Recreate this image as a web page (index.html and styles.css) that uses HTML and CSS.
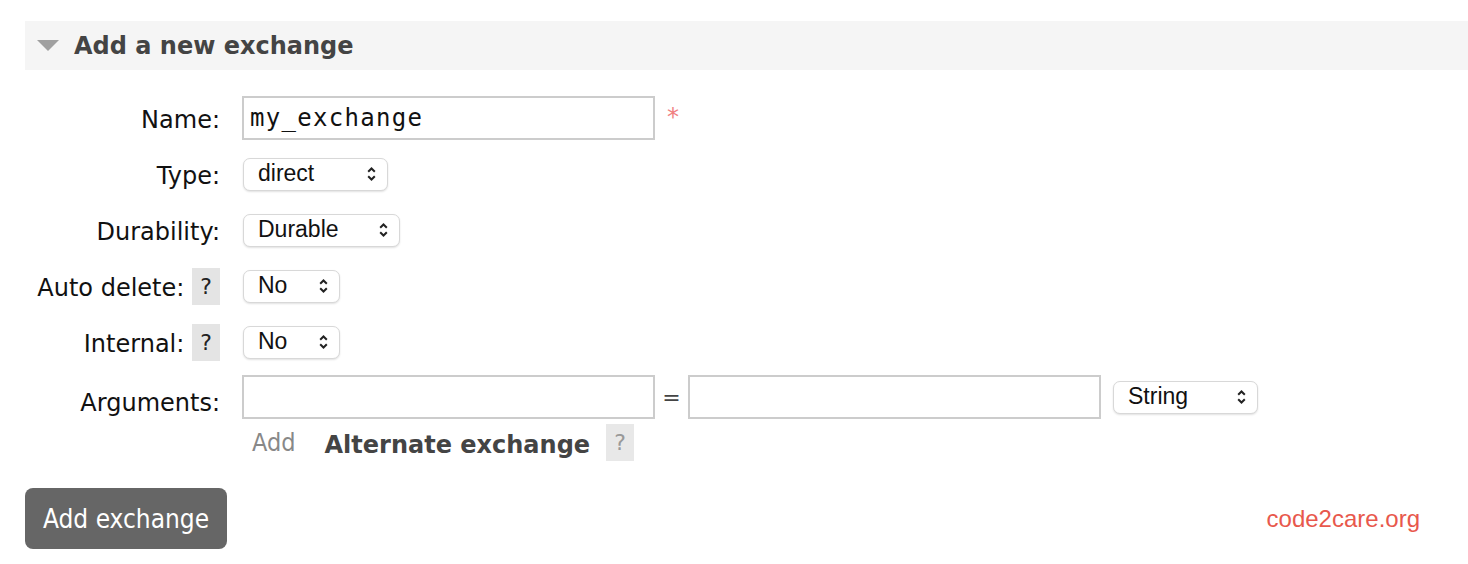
FILE: index.html
```html
<!DOCTYPE html>
<html>
	<head>
		<meta charset="utf-8" />
		<title>Add a new exchange</title>
		<link rel="stylesheet" href="styles.css">
	</head>
	<body>
		<div class="section">
			<h2><span class="arrow"></span>Add a new exchange</h2>
			<form class="hider">
				<div class="row">
					<div class="label">Name:</div>
					<div class="field">
						<input class="text mono" type="text" value="my_exchange" />
						<span class="mand">*</span>
					</div>
				</div>
				<div class="row">
					<div class="label">Type:</div>
					<div class="field">
						<span class="select w-type">direct<svg viewBox="0 0 10 14"><path d="M2 5 L5 2 L8 5 M2 9 L5 12 L8 9" /></svg></span>
					</div>
				</div>
				<div class="row">
					<div class="label">Durability:</div>
					<div class="field">
						<span class="select w-dur">Durable<svg viewBox="0 0 10 14"><path d="M2 5 L5 2 L8 5 M2 9 L5 12 L8 9" /></svg></span>
					</div>
				</div>
				<div class="row">
					<div class="label">Auto delete: <span class="help">?</span></div>
					<div class="field">
						<span class="select w-no">No<svg viewBox="0 0 10 14"><path d="M2 5 L5 2 L8 5 M2 9 L5 12 L8 9" /></svg></span>
					</div>
				</div>
				<div class="row">
					<div class="label">Internal: <span class="help">?</span></div>
					<div class="field">
						<span class="select w-no">No<svg viewBox="0 0 10 14"><path d="M2 5 L5 2 L8 5 M2 9 L5 12 L8 9" /></svg></span>
					</div>
				</div>
				<div class="row args">
					<div class="label">Arguments:</div>
					<div class="field multi">
						<div class="line">
							<input class="text" type="text" value="" />
							<span class="eq">=</span>
							<input class="text" type="text" value="" />
							<span class="select w-type">String<svg viewBox="0 0 10 14"><path d="M2 5 L5 2 L8 5 M2 9 L5 12 L8 9" /></svg></span>
						</div>
						<div class="line sub">
							<span class="add">Add</span>
							<span class="alt">Alternate exchange</span>
							<span class="help faded">?</span>
						</div>
					</div>
				</div>
				<div class="actions">
					<button type="button" class="submit">Add exchange</button>
					<span class="mark">code2care.org</span>
				</div>
			</form>
		</div>
	</body>
</html>
```

FILE: styles.css
```css
body {
	margin:0;
	padding:21px 0 0 25px;
	font-family:"DejaVu Sans", Verdana, sans-serif;
	color:#222;
	background:#fff;
}
h2 {
	margin:0;
	height:49px;
	display:flex;
	align-items:center;
	background:#f5f5f5;
	color:#444;
	font-size:24px;
	font-weight:bold;
}
.arrow {
	width:0;
	height:0;
	margin:0 15px 0 12px;
	border-left:11px solid transparent;
	border-right:11px solid transparent;
	border-top:11px solid #a0a0a0;
}
.hider {
	padding-top:20px;
}
.row {
	display:flex;
	align-items:center;
	height:56px;
}
.label {
	box-sizing:border-box;
	width:195px;
	display:flex;
	align-items:center;
	justify-content:flex-end;
	font-size:24px;
	color:#111;
	white-space:pre;
}
.label.txt,
.row > .label {
	padding-top:4px;
}
.field {
	margin-left:22px;
	display:flex;
	align-items:center;
}
.help {
	display:inline-flex;
	align-items:center;
	justify-content:center;
	width:28px;
	height:37px;
	margin-left:0;
	background:#e4e4e4;
	color:#222;
	font-size:22px;
}
.label .help {
	margin-top:-4px;
}
.help.faded {
	color:#999;
	background:#e8e8e8;
}
input.text {
	box-sizing:border-box;
	width:413px;
	height:44px;
	margin:0;
	padding:0 6px;
	border:2px solid #ccc;
	font-size:22px;
	outline:none;
}
input.mono {
	font-family:"DejaVu Sans Mono", monospace;
	font-size:24px;
	letter-spacing:1.3px;
	color:#111;
}
.mand {
	margin-left:12px;
	margin-top:-3px;
	color:#f08080;
	font-size:24px;
}
.select {
	box-sizing:border-box;
	display:inline-flex;
	align-items:center;
	justify-content:space-between;
	height:33px;
	padding:0 10px 2px 14px;
	margin-left:1px;
	border:1px solid #d8d8d8;
	border-radius:7px;
	box-shadow:0 1px 2px rgba(0,0,0,0.12);
	background:#fff;
	font-family:"Liberation Sans", Arial, sans-serif;
	font-size:23px;
	color:#111;
}
.select svg {
	width:11px;
	height:16px;
	margin-top:2px;
	fill:none;
	stroke:#222;
	stroke-width:1.8;
}
.w-type { width:145px; }
.w-dur { width:157px; }
.w-no { width:97px; }
.args {
	height:auto;
	align-items:flex-start;
}
.args .label {
	height:56px;
	padding-top:10px;
}
.multi {
	flex-direction:column;
	align-items:flex-start;
	padding-top:5px;
}
.line {
	display:flex;
	align-items:center;
}
.eq {
	width:33px;
	text-align:center;
	font-size:22px;
	color:#444;
}
.line .select {
	margin-left:12px;
}
.sub {
	margin-top:5px;
	height:37px;
}
.add {
	margin-left:10px;
	font-family:"DejaVu Sans Condensed", "DejaVu Sans", sans-serif;
	font-size:25px;
	color:#888;
}
.alt {
	margin-left:29px;
	margin-top:4px;
	font-weight:bold;
	font-size:24px;
	color:#444;
}
.sub .help {
	margin-left:16px;
}
.actions {
	display:flex;
	align-items:center;
	justify-content:space-between;
	padding:27px 48px 0 0;
}
.submit {
	width:202px;
	height:61px;
	border:0;
	border-radius:8px;
	background:#666;
	color:#fff;
	font-family:"DejaVu Sans Condensed", "DejaVu Sans", sans-serif;
	font-size:26px;
	padding:0;
}
.mark {
	font-family:"Liberation Sans", Arial, sans-serif;
	font-size:24px;
	color:#e8584c;
}
```
